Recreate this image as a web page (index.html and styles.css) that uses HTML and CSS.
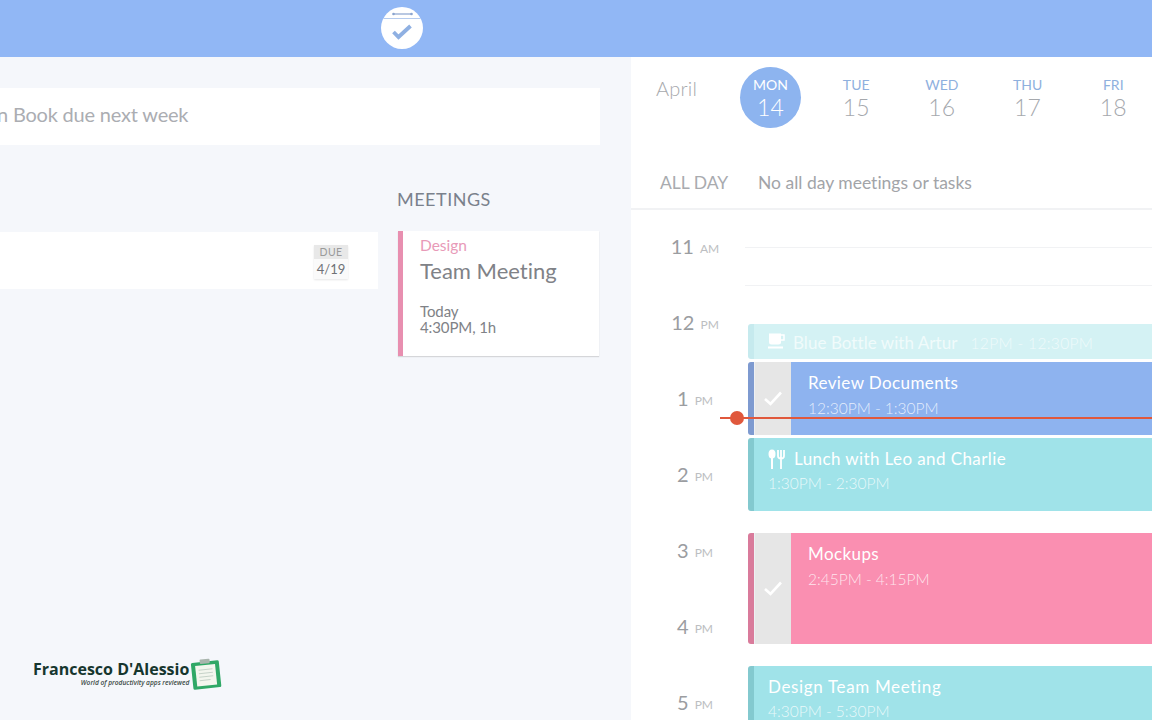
FILE: index.html
```html
<!DOCTYPE html>
<html lang="en">
<head>
<meta charset="utf-8">
<title>Calendar</title>
<link rel="stylesheet" href="styles.css">
</head>
<body>
<header class="topbar">
  <div class="app-badge">
    <svg width="42" height="42" viewBox="0 0 42 42">
      <circle cx="21" cy="21" r="21" fill="#fff"/>
      <path d="M2.500 11.500H39.500" stroke="#b5cbee" stroke-width="1"/>
      <path d="M12.500 7H30.500" stroke="#8aa4cf" stroke-width="1.200"/>
      <circle cx="12.500" cy="7" r="1.300" fill="#8aa4cf"/>
      <circle cx="30.500" cy="7" r="1.300" fill="#8aa4cf"/>
      <path d="M12.500 25L17.500 30L29.500 19" fill="none" stroke="#8fb0e2" stroke-width="3.800"/>
    </svg>
  </div>
</header>
<main class="main">
  <section class="left">
    <div class="search"><span class="search-text">n Book due next week</span></div>
    <div class="columns">
      <div class="tasks">
        <div class="task-card">
          <div class="due"><span class="due-label">DUE</span><span class="due-date">4/19</span></div>
        </div>
      </div>
      <div class="meetings">
        <h2 class="meetings-title">MEETINGS</h2>
        <article class="meeting-card">
          <div class="meeting-tag">Design</div>
          <div class="meeting-name">Team Meeting</div>
          <div class="meeting-when">Today<br>4:30PM, 1h</div>
        </article>
      </div>
    </div>
    <div class="watermark">
      <div class="wm-text">
        <div class="wm-name">Francesco D'Alessio</div>
        <div class="wm-tag">World of productivity apps reviewed</div>
      </div>
      <svg class="wm-icon" width="32" height="32" viewBox="0 0 32 32">
        <g transform="rotate(-6 16 16)">
          <rect x="2" y="3.500" width="28" height="27" rx="1.500" fill="#2fa866"/>
          <rect x="6" y="7" width="20" height="20.500" fill="#f3f6ee"/>
          <rect x="11" y="1" width="10" height="4.500" rx="1" fill="#a9b5ad"/>
          <path d="M9 11.500H23M9 15H23M9 18.500H23M9 22H20" stroke="#c6d3c9" stroke-width="1"/>
        </g>
      </svg>
    </div>
  </section>
  <section class="right">
    <div class="week">
      <div class="month">April</div>
      <div class="day today"><span class="dow">MON</span><span class="num">14</span></div>
      <div class="day"><span class="dow">TUE</span><span class="num">15</span></div>
      <div class="day"><span class="dow">WED</span><span class="num">16</span></div>
      <div class="day"><span class="dow">THU</span><span class="num">17</span></div>
      <div class="day"><span class="dow">FRI</span><span class="num">18</span></div>
    </div>
    <div class="allday">
      <span class="allday-label">ALL DAY</span>
      <span class="allday-text">No all day meetings or tasks</span>
    </div>
    <div class="timeline">
      <div class="hours">
        <div class="hour"><b>11</b><small>AM</small></div>
        <div class="hour"><b>12</b><small>PM</small></div>
        <div class="hour"><b>1</b><small>PM</small></div>
        <div class="hour"><b>2</b><small>PM</small></div>
        <div class="hour"><b>3</b><small>PM</small></div>
        <div class="hour"><b>4</b><small>PM</small></div>
        <div class="hour"><b>5</b><small>PM</small></div>
      </div>
      <div class="track">
        <div class="gridline first"></div>
        <div class="gridline second"></div>
        <div class="event coffee">
          <svg class="ev-icon" width="18" height="18" viewBox="0 0 18 18">
            <path d="M2 1.500H14V10a2.500 2.500 0 0 1-2.500 2.500H4.500A2.500 2.500 0 0 1 2 10Z" fill="#fff"/>
            <path d="M14 3H17V8H14" fill="none" stroke="#fff" stroke-width="1.500"/>
            <rect x="1" y="14.500" width="15" height="2" fill="#fff"/>
          </svg>
          <span class="ev-title">Blue Bottle with Artur</span>
          <span class="ev-inline">12PM - 12:30PM</span>
        </div>
        <div class="event task blue">
          <div class="check"><svg width="20" height="16" viewBox="0 0 20 16"><path d="M2 9L7.500 14L18 2.500" fill="none" stroke="#fff" stroke-width="2.600"/></svg></div>
          <div class="ev-body">
            <div class="ev-title">Review Documents</div>
            <div class="ev-time">12:30PM - 1:30PM</div>
          </div>
        </div>
        <div class="event teal lunch">
          <div class="ev-row">
            <svg class="ev-icon" width="18" height="20" viewBox="0 0 18 20">
              <ellipse cx="4" cy="5" rx="3.500" ry="4.500" fill="#fff"/>
              <rect x="3" y="8" width="2" height="12" fill="#fff"/>
              <path d="M10 1V7Q10 9.500 13 9.500Q16 9.500 16 7V1M13 1V20" fill="none" stroke="#fff" stroke-width="1.800"/>
            </svg>
            <span class="ev-title">Lunch with Leo and Charlie</span>
          </div>
          <div class="ev-time">1:30PM - 2:30PM</div>
        </div>
        <div class="event task pink">
          <div class="check"><svg width="20" height="16" viewBox="0 0 20 16"><path d="M2 9L7.500 14L18 2.500" fill="none" stroke="#fff" stroke-width="2.600"/></svg></div>
          <div class="ev-body">
            <div class="ev-title">Mockups</div>
            <div class="ev-time">2:45PM - 4:15PM</div>
          </div>
        </div>
        <div class="event teal design">
          <div class="ev-title">Design Team Meeting</div>
          <div class="ev-time">4:30PM - 5:30PM</div>
        </div>
      </div>
      <div class="now"><span class="now-dot"></span></div>
    </div>
  </section>
</main>
</body>
</html>
```
FILE: styles.css
```css
* { box-sizing: border-box; }
html, body { margin: 0; height: 100%; }
body {
  width: 1152px;
  height: 720px;
  overflow: hidden;
  display: flex;
  flex-direction: column;
  font-family: "Lato", "Open Sans", sans-serif;
  font-variant-ligatures: none;
  background: #fff;
}
.topbar {
  height: 57px;
  flex: none;
  background: #91b7f5;
  padding: 7px 0 0 381px;
}
.app-badge { width: 42px; height: 42px; }
.app-badge svg { display: block; }
.main { flex: 1; display: flex; min-height: 0; }

.left {
  position: relative;
  width: 631px;
  flex: none;
  background: #f5f7fb;
  padding-top: 31px;
}
.search {
  width: 600px;
  height: 57px;
  background: #fff;
  display: flex;
  align-items: center;
  overflow: hidden;
  padding-bottom: 6px;
}
.search-text {
  margin-left: -3px;
  font-size: 20px;
  letter-spacing: -.2px;
  color: #abadb2;
  white-space: nowrap;
}
.columns { display: flex; gap: 19px; margin-top: 43px; }
.tasks { width: 378px; padding-top: 44px; }
.task-card {
  height: 57px;
  background: #fff;
  display: flex;
  justify-content: flex-end;
  align-items: center;
  padding-right: 30px;
}
.due { width: 34px; margin-top: 2px; display: flex; flex-direction: column; text-align: center; box-shadow: 0 1px 2px #e6e6e6; }
.due-label { background: #e8e8e8; color: #9a9a9a; font-size: 10.500px; line-height: 14px; letter-spacing: .4px; }
.due-date { background: #fafafa; color: #6f7176; font-size: 13px; line-height: 20px; }
.meetings { width: 202px; }
.meetings-title {
  margin: 0;
  font-size: 18px;
  font-weight: 400;
  line-height: 22px;
  letter-spacing: .5px;
  color: #7a818c;
}
.meeting-card {
  margin: 21px 0 0 1px;
  height: 125px;
  background: #fff;
  border-left: 5px solid #e88fb0;
  padding: 5px 0 0 17px;
  box-shadow: 0 1px 1px #d5d6d9;
}
.meeting-tag { font-size: 15.500px; line-height: 18px; color: #e89ab8; }
.meeting-name { margin-top: 3px; font-size: 22px; line-height: 28px; color: #808287; }
.meeting-when { margin-top: 18px; font-size: 15px; line-height: 16px; letter-spacing: -.1px; color: #808287; }
.watermark {
  position: absolute;
  left: 33px;
  top: 601px;
  display: flex;
  align-items: center;
  gap: 1px;
}
.wm-name { font-family: "Open Sans", sans-serif; font-size: 16px; line-height: 17px; font-weight: 700; color: #16362e; white-space: nowrap; }
.wm-tag { margin-top: 1px; font-family: "Open Sans", sans-serif; font-size: 6.600px; line-height: 8px; font-style: italic; font-weight: 600; color: #3b4a45; text-align: right; white-space: nowrap; }
.wm-icon { display: block; }

.right { flex: 1; min-width: 0; display: flex; flex-direction: column; background: #fff; }
.week {
  height: 98px;
  flex: none;
  display: flex;
  padding: 10px 0 0 25px;
}
.month { width: 84px; flex: none; padding-top: 8px; font-size: 20px; line-height: 26px; font-weight: 300; color: #a7a9ad; letter-spacing: .2px; }
.day {
  width: 61px;
  height: 61px;
  flex: none;
  margin-right: 24.700px;
  display: flex;
  flex-direction: column;
  align-items: center;
  padding-top: 10px;
}
.today { background: #8db4ef; border-radius: 50%; }
.dow { font-size: 14px; line-height: 16px; color: #8fb0de; }
.num { margin-top: 1px; font-size: 23px; line-height: 27px; font-weight: 300; color: #a5a8ad; letter-spacing: .2px; }
.today .dow, .today .num { color: #fff; }
.allday {
  height: 55px;
  flex: none;
  display: flex;
  align-items: center;
  border-bottom: 2px solid #f1f2f4;
  padding: 2px 0 0 29px;
  font-size: 17.500px;
  color: #a9abaf;
}
.allday-label { width: 98px; }
.allday-text { color: #a2a4a8; }

.timeline { position: relative; flex: 1; min-height: 0; display: flex; overflow: hidden; }
.hours { width: 117px; flex: none; padding-left: 29px; margin-top: -2px; }
.hour {
  height: 76px;
  width: 70px;
  display: flex;
  align-items: center;
  justify-content: center;
  gap: 6px;
}
.hour b { font-size: 20px; font-weight: 400; color: #9b9da1; }
.hour small { font-size: 12px; color: #bcbec1; padding-top: 5px; }
.track { flex: 1; min-width: 0; position: relative; padding-top: 114px; }
.gridline { position: absolute; left: -3px; right: 0; height: 1px; background: #f1f2f4; }
.gridline.first { top: 37px; }
.gridline.second { top: 75px; }
.event { border-radius: 3px 0 0 3px; color: #fff; font-size: 17px; }
.ev-title { font-size: 17px; line-height: 24px; letter-spacing: .4px; color: #fff; }
.ev-time { font-size: 15.500px; line-height: 24px; font-weight: 300; color: rgba(255,255,255,.78); }
.coffee {
  height: 35px;
  margin-bottom: 3px;
  display: flex;
  align-items: center;
  background: #d4f2f4;
  border-left: 6px solid #c6eaee;
  padding: 2px 0 0 13px;
}
.coffee .ev-icon { margin: -3px 8px 0 0; }
.coffee .ev-title { color: #f0fbfb; letter-spacing: .05px; }
.ev-inline { margin-left: 13px; font-size: 15.500px; font-weight: 300; color: #effafb; letter-spacing: .35px; }
.task { display: flex; }
.check {
  width: 37px;
  flex: none;
  background: #e6e6e6;
  border-left: 1px solid #eef0f3;
  display: flex;
  align-items: center;
  justify-content: center;
}
.check svg { margin-bottom: 2px; }
.ev-body { flex: 1; padding: 9px 0 0 17px; }
.ev-body .ev-title { margin-bottom: 1px; }
.blue { height: 73px; margin-bottom: 3px; background: #8eb3ef; border-left: 6px solid #7e9ad0; }
.pink { height: 111px; margin-bottom: 22px; background: #fa8fb1; border-left: 6px solid #d97b9b; }
.teal { background: #a0e3e9; border-left: 6px solid #83c9cf; padding: 9px 0 0 14px; }
.lunch { height: 73px; margin-bottom: 22px; }
.ev-row { display: flex; align-items: center; gap: 8px; }
.design { height: 60px; }
.design .ev-title { letter-spacing: .65px; }
.now {
  position: absolute;
  left: 89px;
  right: 0;
  top: 207px;
  height: 2px;
  background: #e0583c;
}
.now-dot {
  position: absolute;
  left: 10px;
  top: -6px;
  width: 14px;
  height: 14px;
  border-radius: 50%;
  background: #e0583c;
}
```
